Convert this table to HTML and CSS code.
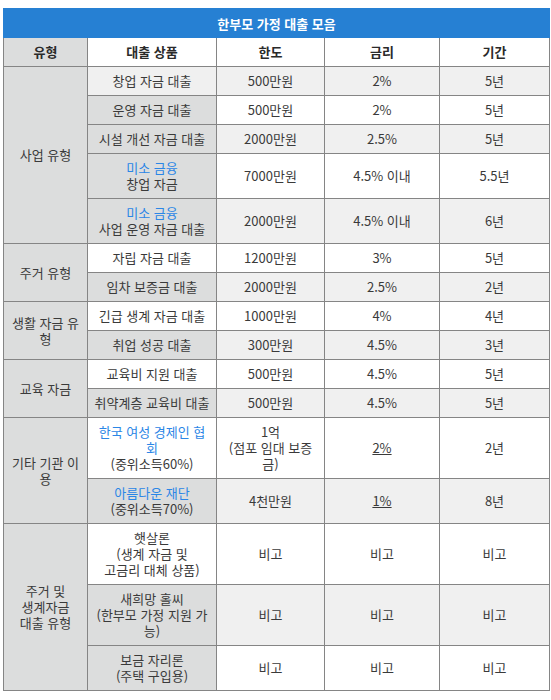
FILE: index.html
```html
<!DOCTYPE html>
<html lang="ko">
<head>
<meta charset="utf-8">
<link rel="stylesheet" href="styles.css">
</head>
<body>
<table class="loans">
  <colgroup>
    <col class="c1"><col class="c2"><col class="c3"><col class="c4"><col class="c5">
  </colgroup>
  <thead>
    <tr><th class="title" colspan="5">한부모 가정 대출 모음</th></tr>
    <tr class="head"><th class="gray">유형</th><th>대출 상품</th><th>한도</th><th>금리</th><th>기간</th></tr>
  </thead>
  <tbody>
    <tr class="alt"><td class="gray" rowspan="5">사업 유형</td><td>창업 자금 대출</td><td>500만원</td><td>2%</td><td>5년</td></tr>
    <tr><td class="gray">운영 자금 대출</td><td>500만원</td><td>2%</td><td>5년</td></tr>
    <tr class="alt"><td class="gray">시설 개선 자금 대출</td><td>2000만원</td><td>2.5%</td><td>5년</td></tr>
    <tr><td class="gray"><span class="link">미소 금융</span><br>창업 자금</td><td>7000만원</td><td>4.5% 이내</td><td>5.5년</td></tr>
    <tr class="alt"><td class="gray"><span class="link">미소 금융</span><br>사업 운영 자금 대출</td><td>2000만원</td><td>4.5% 이내</td><td>6년</td></tr>

    <tr><td class="gray" rowspan="2">주거 유형</td><td>자립 자금 대출</td><td>1200만원</td><td>3%</td><td>5년</td></tr>
    <tr class="alt"><td class="gray">임차 보증금 대출</td><td>2000만원</td><td>2.5%</td><td>2년</td></tr>

    <tr><td class="gray" rowspan="2">생활 자금 유형</td><td>긴급 생계 자금 대출</td><td>1000만원</td><td>4%</td><td>4년</td></tr>
    <tr class="alt"><td class="gray">취업 성공 대출</td><td>300만원</td><td>4.5%</td><td>3년</td></tr>

    <tr><td class="gray" rowspan="2">교육 자금</td><td>교육비 지원 대출</td><td>500만원</td><td>4.5%</td><td>5년</td></tr>
    <tr class="alt"><td class="gray">취약계층 교육비 대출</td><td>500만원</td><td>4.5%</td><td>5년</td></tr>

    <tr><td class="gray" rowspan="2">기타 기관 이용</td><td><span class="link">한국 여성 경제인 협회</span><br>(중위소득60%)</td><td>1억<br>(점포 임대 보증금)</td><td><u>2%</u></td><td>2년</td></tr>
    <tr class="alt"><td class="gray"><span class="link">아름다운 재단</span><br>(중위소득70%)</td><td>4천만원</td><td><u>1%</u></td><td>8년</td></tr>

    <tr><td class="gray" rowspan="3">주거 및<br>생계자금<br>대출 유형</td><td>햇살론<br>(생계 자금 및<br>고금리 대체 상품)</td><td>비고</td><td>비고</td><td>비고</td></tr>
    <tr class="alt"><td class="gray">새희망 홀씨<br>(한부모 가정 지원 가능)</td><td>비고</td><td>비고</td><td>비고</td></tr>
    <tr><td class="gray">보금 자리론<br>(주택 구입용)</td><td>비고</td><td>비고</td><td>비고</td></tr>
  </tbody>
</table>
</body>
</html>
```
FILE: styles.css
```css
html, body {
  margin: 0;
  padding: 0;
  background: #ffffff;
}
body {
  padding: 8px 0 0 3px;
  font-family: "Noto Sans CJK KR", "Noto Sans", sans-serif;
  font-size: 13px;
  color: #3a3a3a;
}
.loans {
  width: 546px;
  table-layout: fixed;
  border-collapse: collapse;
}
.c1 { width: 84px; }
.c2 { width: 129px; }
.c3 { width: 108px; }
.c4 { width: 115px; }
.c5 { width: 110px; }
.loans th,
.loans td {
  border: 1px solid #858585;
  padding: 6px 6px;
  line-height: 16px;
  text-align: center;
  vertical-align: middle;
  background: #ffffff;
}
.loans th {
  font-weight: 700;
  color: #2a2a2a;
}
.loans th.title {
  background: #2680d3;
  border-color: #2680d3;
  color: #ffffff;
  padding-top: 7px;
  padding-bottom: 5px;
}
.loans tr.alt td {
  background: #f0f0f0;
}
.loans th.gray,
.loans td.gray,
.loans tr.alt td.gray {
  background: #dcdddd;
}
.link {
  color: #2b86e6;
}
u {
  text-decoration: underline;
}
```
